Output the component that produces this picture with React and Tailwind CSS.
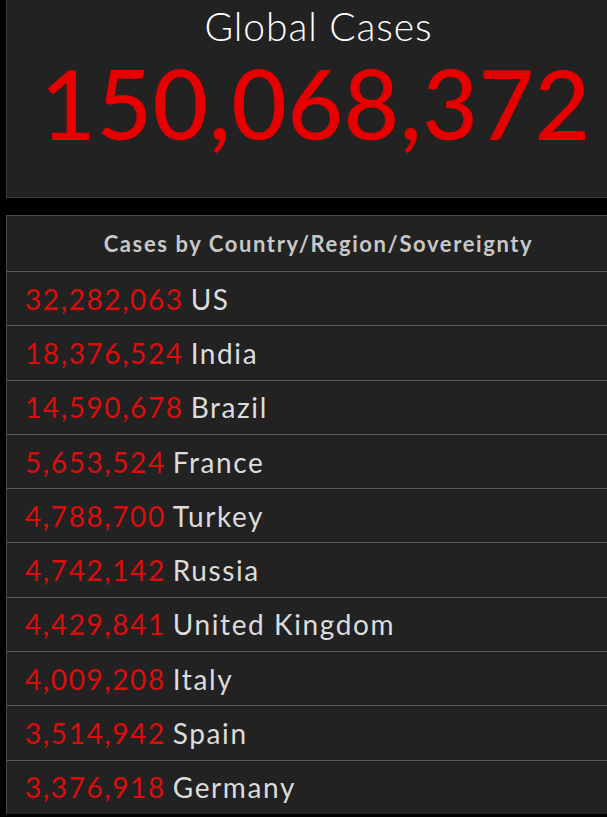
import React from 'react';

const rows = [
    ['32,282,063', 'US'],
    ['18,376,524', 'India'],
    ['14,590,678', 'Brazil'],
    ['5,653,524', 'France'],
    ['4,788,700', 'Turkey'],
    ['4,742,142', 'Russia'],
    ['4,429,841', 'United Kingdom'],
    ['4,009,208', 'Italy'],
    ['3,514,942', 'Spain'],
    ['3,376,918', 'Germany'],
];

const App = () => {
    return (
        <div className="h-[817px] w-[607px] overflow-hidden bg-black pl-[6px] font-['Lato',sans-serif]">
            {/* Global total - panel runs past the right edge of the window */}
            <div className="flex h-[198px] w-[624px] flex-col items-center border-b border-l border-[#3a3a3a] bg-[#222222]">
                <div className="mt-[3px] text-[39px] font-light leading-[46px] tracking-[0.9px] text-white">Global Cases</div>
                <div className="mr-[6px] text-[96px] font-medium leading-[108px] tracking-[0.5px] text-[#e60000]">
                    150,068,372
                </div>
            </div>

            {/* Country list */}
            <div className="mt-[17px] w-[624px] border-l border-t border-[#4a4a4a] bg-[#222222]">
                <div className="flex h-[55px] items-center justify-center text-[22px] font-bold tracking-[1.6px] text-[#c8c8c8]">
                    Cases by Country/Region/Sovereignty
                </div>
                {rows.map(([num, name]) => (
                    <div
                        key={name}
                        className="flex h-[54.3px] items-center border-t border-[#5a5a5a] pl-[18px] text-[28px] leading-none tracking-[1.6px]"
                    >
                        <span className="text-[#de0d0d]">{num}</span>
                        <span className="ml-[7px] text-[#dcdcdc]">{name}</span>
                    </div>
                ))}
            </div>
        </div>
    );
};

export default App;
